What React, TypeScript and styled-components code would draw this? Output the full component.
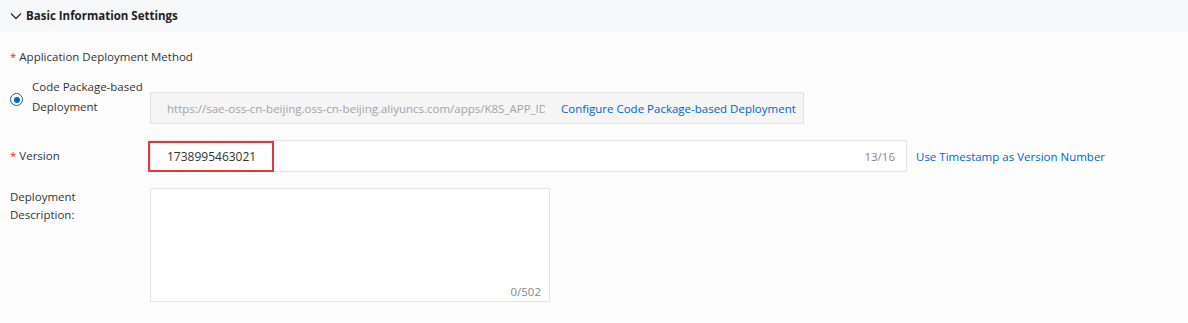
import React from "react";
import styled, { createGlobalStyle } from "styled-components";

const GlobalStyle = createGlobalStyle`
  html, body {
    margin: 0;
    padding: 0;
    background: #fdfdfd;
    font-family: "Open Sans", "Noto Sans", sans-serif;
    font-size: 11.5px;
    color: #333;
  }
`;

export default function App() {
  return (
    <>
      <GlobalStyle />
      <Panel>
        <Header>
          <Chevron viewBox="0 0 12 12">
            <path d="M1 3.5 L6 8.5 L11 3.5" fill="none" stroke="#333" strokeWidth="1.3" />
          </Chevron>
          <Title>Basic Information Settings</Title>
        </Header>
        <Body>
          <TopLabel>
            <Star>*</Star> Application Deployment Method
          </TopLabel>
          <Row $top={10}>
            <RadioCell>
              <Radio />
              <RadioText>Code Package-based Deployment</RadioText>
            </RadioCell>
            <ReadonlyBox>
              <UrlText>https://sae-oss-cn-beijing.oss-cn-beijing.aliyuncs.com/apps/K8S_APP_ID/</UrlText>
              <Link>Configure Code Package-based Deployment</Link>
            </ReadonlyBox>
          </Row>
          <Row $top={16} $center>
            <Label>
              <Star>*</Star> Version
            </Label>
            <VersionInput>
              <Highlight>1738995463021</Highlight>
              <Counter>13/16</Counter>
            </VersionInput>
            <Link $ml={9}>Use Timestamp as Version Number</Link>
          </Row>
          <Row $top={16}>
            <Label $wrap>Deployment Description:</Label>
            <TextArea>
              <Counter $bottom>0/502</Counter>
            </TextArea>
          </Row>
        </Body>
      </Panel>
    </>
  );
}

const Panel = styled.div`
  width: 1188px;
  height: 323px;
`;

const Header = styled.div`
  height: 31px;
  background: #f7f8fa;
  display: flex;
  align-items: center;
  padding-left: 10px;
  gap: 4px;
`;

const Chevron = styled.svg`
  width: 12px;
  height: 12px;
`;

const Title = styled.span`
  font-size: 11.5px;
  font-weight: 700;
  color: #222;
`;

const Body = styled.div`
  padding: 16px 0 0 10px;
`;

const TopLabel = styled.div`
  height: 20px;
  line-height: 20px;
`;

const Star = styled.span`
  color: #d93026;
`;

const Row = styled.div<{ $top?: number; $center?: boolean }>`
  display: flex;
  align-items: ${(p) => (p.$center ? "center" : "flex-start")};
  margin-top: ${(p) => p.$top ?? 0}px;
`;

const RadioCell = styled.div`
  width: 140px;
  display: flex;
  align-items: center;
`;

const Radio = styled.span`
  width: 13px;
  height: 13px;
  margin-top: 5px;
  box-sizing: border-box;
  border-radius: 50%;
  border: 1.5px solid #0064c8;
  display: flex;
  align-items: center;
  justify-content: center;
  flex-shrink: 0;
  &::after {
    content: "";
    width: 6px;
    height: 6px;
    border-radius: 50%;
    background: #0064c8;
  }
`;

const RadioText = styled.span`
  margin-left: 9px;
  width: 118px;
  line-height: 20px;
`;

const ReadonlyBox = styled.div`
  width: 654px;
  height: 32px;
  margin-top: 15px;
  box-sizing: border-box;
  background: #f5f5f5;
  border: 1px solid #e3e3e3;
  display: flex;
  align-items: center;
  padding: 0 8px 0 16px;
`;

const UrlText = styled.span`
  width: 378px;
  overflow: hidden;
  white-space: nowrap;
  color: #a3a3a3;
  flex-shrink: 0;
`;

const Link = styled.span<{ $ml?: number }>`
  color: #0064c8;
  margin-left: ${(p) => p.$ml ?? 16}px;
  white-space: nowrap;
`;

const Label = styled.div<{ $wrap?: boolean }>`
  width: 140px;
  line-height: 18px;
  ${(p) => (p.$wrap ? "width: 80px; margin-right: 60px;" : "")}
`;

const VersionInput = styled.div`
  position: relative;
  width: 757px;
  height: 32px;
  box-sizing: border-box;
  border: 1px solid #e3e3e3;
  background: #fff;
  display: flex;
  align-items: center;
  justify-content: space-between;
  padding-right: 11px;
`;

const Highlight = styled.span`
  margin-left: -3px;
  width: 126px;
  height: 31px;
  box-sizing: border-box;
  border: 2px solid #e0383c;
  display: flex;
  align-items: center;
  padding-left: 17px;
  color: #333;
  font-size: 12px;
`;

const Counter = styled.span<{ $bottom?: boolean }>`
  color: #888;
  ${(p) =>
    p.$bottom
      ? "position: absolute; right: 8px; bottom: 2px;"
      : ""}
`;

const TextArea = styled.div`
  position: relative;
  width: 400px;
  height: 114px;
  box-sizing: border-box;
  border: 1px solid #e3e3e3;
  background: #fff;
`;
